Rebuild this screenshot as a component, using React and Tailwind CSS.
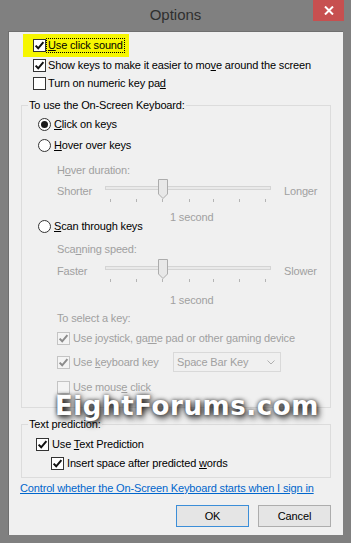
import React from 'react';

function Check({ checked, disabled }) {
  return (
    <span
      className={`w-[13px] h-[13px] shrink-0 border flex items-center justify-center ${
        disabled ? 'border-[#c4c4c4] bg-[#f4f4f4]' : 'border-[#333] bg-white'
      }`}
    >
      {checked && (
        <svg width="11" height="11" viewBox="0 0 11 11">
          <path
            d="M1.6 5.6 L4.2 8.3 L9.4 2.2"
            fill="none"
            stroke={disabled ? '#8c8c8c' : '#111'}
            strokeWidth="2"
          />
        </svg>
      )}
    </span>
  );
}

function Radio({ checked }) {
  return (
    <span className="w-[13px] h-[13px] shrink-0 rounded-full border border-[#333] bg-white flex items-center justify-center">
      {checked && <span className="w-[7px] h-[7px] rounded-full bg-[#1a1a1a]" />}
    </span>
  );
}

function Slider() {
  const ticks = [5, 31, 57, 84, 108, 134, 160];
  return (
    <svg width="166" height="24" viewBox="0 0 166 24" className="shrink-0">
      <rect x="0.5" y="7.5" width="165" height="3" fill="#e9e9e9" stroke="#d4d4d4" />
      {ticks.map((x) => (
        <line key={x} x1={x + 0.5} y1="20" x2={x + 0.5} y2="23" stroke="#b4b4b4" />
      ))}
      <path d="M53.5 0.5 H62.5 V15 L58 19.5 L53.5 15 Z" fill="#e8e8e8" stroke="#acacac" />
    </svg>
  );
}

function Row({ className = '', children }) {
  return <div className={`h-[18px] flex items-center ${className}`}>{children}</div>;
}

function GroupLabel({ children }) {
  return (
    <div className="-mt-[9px] ml-[6px] h-[16px] flex items-center">
      <span className="bg-[#f0f0f0] px-[1px]">{children}</span>
    </div>
  );
}

export default function App() {
  const gray = 'text-[#a0a0a0]';
  return (
    <div className="w-[351px] h-[543px] bg-[#808080] overflow-hidden font-['Liberation_Sans',Arial,sans-serif] text-[11px] tracking-[-0.15px] text-black">
      {/* title bar */}
      <div className="h-[31px] grid grid-cols-[1fr_auto_1fr]">
        <div />
        <div className="flex items-center text-[15px] tracking-normal text-[#2f2f2f] pb-px">Options</div>
        <div className="flex justify-end items-start pr-[7px]">
          <div className="w-[31px] h-[21px] bg-[#c75050] flex items-center justify-center">
            <svg width="10" height="9" viewBox="0 0 10 9">
              <path d="M1 0.5 L9 8.5 M9 0.5 L1 8.5" stroke="#fff" strokeWidth="2" />
            </svg>
          </div>
        </div>
      </div>

      {/* client area */}
      <div className="relative mx-[8px] h-[504px] bg-[#f0f0f0] border-t border-l border-[#6f6f6f]">
        <div className="-mt-px -ml-px">
          <div className="mt-[3px] ml-[15px] inline-flex items-center h-[23px] bg-[#f6f600] pl-[10px] pr-[5px]">
            <Check checked />
            <span className="ml-[1px] outline outline-1 outline-dotted outline-black px-[1px] leading-[13px]">
              <u>U</u>se click sound
            </span>
          </div>
          <Row className="-mt-px ml-[25px] gap-[2px]">
            <Check checked />
            <span>
              Show keys to make it easier to mo<u>v</u>e around the screen
            </span>
          </Row>
          <Row className="ml-[25px] gap-[2px]">
            <Check />
            <span>
              Turn on numeric key pa<u>d</u>
            </span>
          </Row>

          {/* group: on-screen keyboard */}
          <div className="mt-[13px] ml-[13px] w-[310px] h-[303px] border border-[#dcdcdc]">
            <GroupLabel>To use the On-Screen Keyboard:</GroupLabel>
            <Row className="mt-[2px] ml-[16px] gap-[3px]">
              <Radio checked />
              <span>
                <u>C</u>lick on keys
              </span>
            </Row>
            <Row className="mt-[3px] ml-[16px] gap-[3px]">
              <Radio />
              <span>
                <u>H</u>over over keys
              </span>
            </Row>
            <Row className={`mt-[7px] ml-[35px] ${gray}`}>
              <span>
                H<u>o</u>ver duration:
              </span>
            </Row>
            <div className={`h-[24px] flex items-center ml-[35px] ${gray}`}>
              <span className="w-[48px]">Shorter</span>
              <Slider />
              <span className="ml-[13px]">Longer</span>
            </div>
            <Row className={`mt-[5px] ml-[148px] ${gray}`}>1 second</Row>
            <Row className="-mt-[9px] ml-[16px] gap-[3px] w-[120px]">
              <Radio />
              <span>
                <u>S</u>can through keys
              </span>
            </Row>
            <Row className={`mt-[5px] ml-[35px] ${gray}`}>
              <span>
                Sca<u>n</u>ning speed:
              </span>
            </Row>
            <div className={`mt-[1px] h-[24px] flex items-center ml-[35px] ${gray}`}>
              <span className="w-[48px]">Faster</span>
              <Slider />
              <span className="ml-[13px]">Slower</span>
            </div>
            <Row className={`mt-[8px] ml-[148px] ${gray}`}>1 second</Row>
            <Row className={`ml-[35px] ${gray}`}>To select a key:</Row>
            <Row className={`mt-[2px] ml-[35px] gap-[3px] ${gray}`}>
              <Check checked disabled />
              <span>
                Use joystick, ga<u>m</u>e pad or other gaming device
              </span>
            </Row>
            <div className={`mt-[5px] h-[20px] flex items-center ml-[35px] ${gray}`}>
              <Check checked disabled />
              <span className="ml-[3px] w-[100px]">
                Use <u>k</u>eyboard key
              </span>
              <div className="w-[108px] h-[20px] border border-[#d9d9d9] flex items-center justify-between pl-[3px] pr-[5px]">
                <span>Space Bar Key</span>
                <svg width="8" height="5" viewBox="0 0 8 5">
                  <path d="M0.5 0.5 L4 4 L7.5 0.5" fill="none" stroke="#b0b0b0" />
                </svg>
              </div>
            </div>
            <Row className={`mt-[6px] ml-[35px] gap-[3px] ${gray}`}>
              <Check disabled />
              <span>
                Use mous<u>e</u> click
              </span>
            </Row>
          </div>

          {/* group: text prediction */}
          <div className="mt-[16px] ml-[13px] w-[310px] h-[54px] border border-[#dcdcdc]">
            <GroupLabel>Text prediction:</GroupLabel>
            <Row className="mt-[3px] ml-[14px] gap-[3px]">
              <Check checked />
              <span>
                Use <u>T</u>ext Prediction
              </span>
            </Row>
            <Row className="mt-[1px] ml-[29px] gap-[3px]">
              <Check checked />
              <span>
                Insert space after predicted <u>w</u>ords
              </span>
            </Row>
          </div>

          <Row className="mt-[1px] ml-[12px]">
            <span className="text-[#0066cc] underline">
              Control whether the On-Screen Keyboard starts when I sign in
            </span>
          </Row>

          <div className="mt-[8px] mr-[12px] flex justify-end gap-[9px]">
            <button className="w-[73px] h-[22px] bg-[#e5e5e5] border border-[#3c8ed8] flex items-center justify-center">
              OK
            </button>
            <button className="w-[73px] h-[22px] bg-[#e5e5e5] border border-[#adadad] flex items-center justify-center">
              Cancel
            </button>
          </div>
        </div>

        {/* watermark */}
        <div className="absolute left-[46px] top-[364px] text-[26px] leading-[20px] font-bold tracking-[0.6px] font-['DejaVu_Sans',sans-serif] text-white [text-shadow:2px_3px_6px_rgba(0,0,0,0.85),0_0_4px_rgba(0,0,0,0.7)] pointer-events-none">
          EightForums.com
        </div>
      </div>
    </div>
  );
}
